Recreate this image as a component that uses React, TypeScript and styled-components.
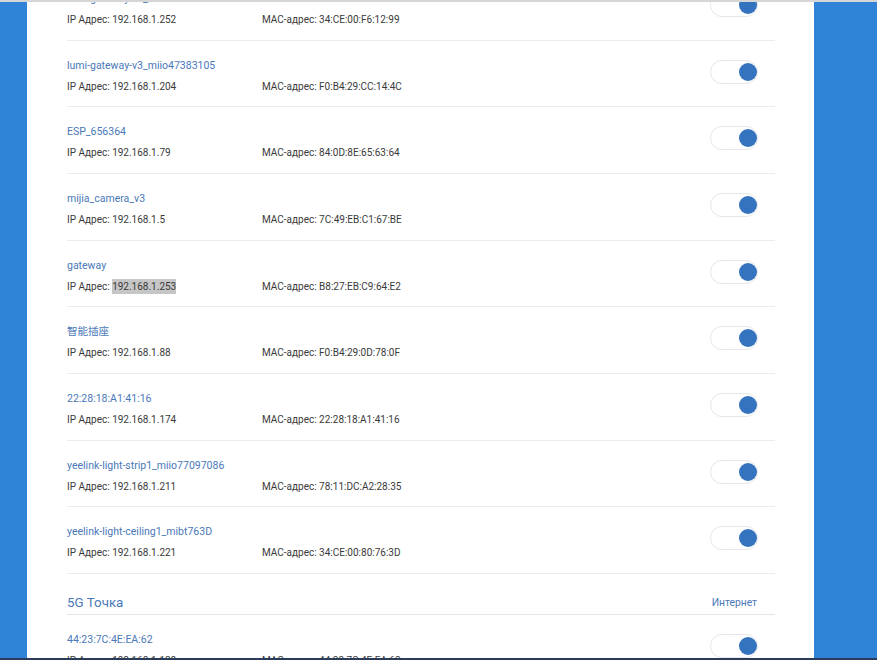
import React from 'react';
import styled, { createGlobalStyle } from 'styled-components';

const GlobalStyle = createGlobalStyle`
  html, body {
    margin: 0;
    padding: 0;
  }
  body {
    font-family: Roboto, 'Noto Sans CJK SC', sans-serif;
  }
`;

interface Device {
  name: string;
  ip: string;
  mac: string;
  selectedIp?: boolean;
}

const devices24: Device[] = [
  { name: 'lumi-gateway-v3_miio47383100', ip: '192.168.1.252', mac: '34:CE:00:F6:12:99' },
  { name: 'lumi-gateway-v3_miio47383105', ip: '192.168.1.204', mac: 'F0:B4:29:CC:14:4C' },
  { name: 'ESP_656364', ip: '192.168.1.79', mac: '84:0D:8E:65:63:64' },
  { name: 'mijia_camera_v3', ip: '192.168.1.5', mac: '7C:49:EB:C1:67:BE' },
  { name: 'gateway', ip: '192.168.1.253', mac: 'B8:27:EB:C9:64:E2', selectedIp: true },
  { name: '智能插座', ip: '192.168.1.88', mac: 'F0:B4:29:0D:78:0F' },
  { name: '22:28:18:A1:41:16', ip: '192.168.1.174', mac: '22:28:18:A1:41:16' },
  { name: 'yeelink-light-strip1_miio77097086', ip: '192.168.1.211', mac: '78:11:DC:A2:28:35' },
  { name: 'yeelink-light-ceiling1_mibt763D', ip: '192.168.1.221', mac: '34:CE:00:80:76:3D' },
];

const devices5: Device[] = [
  { name: '44:23:7C:4E:EA:62', ip: '192.168.1.120', mac: '44:23:7C:4E:EA:62' },
];

const DeviceRow = ({ device }: { device: Device }) => (
  <Row>
    <Info>
      <Name>{device.name}</Name>
      <Details>
        <Field>
          IP Адрес: {device.selectedIp ? <Selected>{device.ip}</Selected> : device.ip}
        </Field>
        <Field>MAC-адрес: {device.mac}</Field>
      </Details>
    </Info>
    <Toggle aria-label="toggle">
      <Knob />
    </Toggle>
  </Row>
);

const App = () => {
  return (
    <Page>
      <GlobalStyle />
      <Side />
      <Panel>
        {/* list is scrolled: the first row is partly hidden above the top edge */}
        <List>
          {devices24.map((d) => (
            <DeviceRow key={d.name + d.ip} device={d} />
          ))}
          <SectionHeader>
            <SectionTitle>5G Точка</SectionTitle>
            <SectionLink>Интернет</SectionLink>
          </SectionHeader>
          {devices5.map((d) => (
            <DeviceRow key={d.name + d.ip} device={d} />
          ))}
        </List>
      </Panel>
      <Side className="right" />
    </Page>
  );
};

export default App;

const Page = styled.div`
  width: 877px;
  height: 660px;
  display: flex;
  overflow: hidden;
  background: #2f84d8;
  border-top: 2px solid #d6d6d6;
  border-bottom: 2px solid #2a3c5a;
  box-sizing: border-box;
`;

const Side = styled.div`
  width: 27px;
  flex-shrink: 0;

  &.right {
    width: 63px;
  }
`;

const Panel = styled.div`
  flex: 1;
  background: #ffffff;
  overflow: hidden;
  padding: 0 39px 0 40px;
`;

const List = styled.div`
  margin-top: -28px;
  display: flex;
  flex-direction: column;
`;

const Row = styled.div`
  height: 66.67px;
  box-sizing: border-box;
  border-bottom: 1px solid #ececf0;
  display: flex;
  align-items: flex-start;
  justify-content: space-between;
  padding-right: 17px;
  flex-shrink: 0;
`;

const Info = styled.div`
  display: flex;
  flex-direction: column;
  padding-top: 16px;
`;

const Name = styled.div`
  font-size: 10.5px;
  line-height: 18px;
  color: #4a78b8;
  height: 18px;
`;

const Details = styled.div`
  display: flex;
  margin-top: 3px;
  font-size: 10px;
  line-height: 18px;
  color: #3a3a3a;
`;

const Field = styled.div`
  width: 195px;
  white-space: nowrap;
`;

const Selected = styled.span`
  background: #c6c6c6;
  padding: 2px 0;
`;

const Toggle = styled.div`
  margin-top: 19px;
  width: 48px;
  height: 24px;
  box-sizing: border-box;
  border: 1px solid #e6e6ea;
  border-radius: 12px;
  background: #fff;
  display: flex;
  align-items: center;
  justify-content: flex-end;
  padding-right: 0;
`;

const Knob = styled.div`
  width: 18px;
  height: 18px;
  border-radius: 50%;
  background: #3474bf;
`;

const SectionHeader = styled.div`
  height: 41px;
  box-sizing: border-box;
  border-bottom: 1px solid #e4e4ea;
  display: flex;
  align-items: flex-end;
  justify-content: space-between;
  padding: 0 18px 1px 0;
  flex-shrink: 0;
`;

const SectionTitle = styled.div`
  font-size: 13.3px;
  line-height: 20px;
  color: #4a78b8;
`;

const SectionLink = styled.div`
  font-size: 10.3px;
  line-height: 20px;
  color: #4a78b8;
`;
